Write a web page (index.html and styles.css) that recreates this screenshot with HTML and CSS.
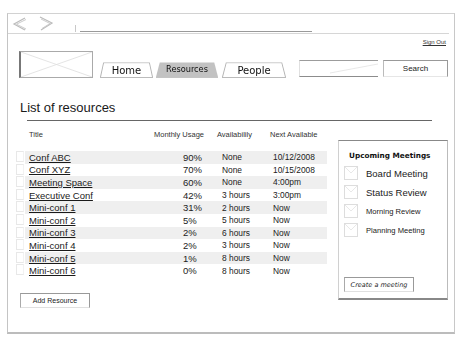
FILE: index.html
```html
<!DOCTYPE html>
<html lang="en">
<head>
<meta charset="UTF-8">
<meta name="viewport" content="width=device-width, initial-scale=1.0">
<title>List of resources</title>
<link rel="stylesheet" href="styles.css">
</head>
<body>
    <div class="window">
        <!-- browser bar -->
        <div class="toolbar">
            <svg class="arrows" width="44" height="16" viewBox="0 0 44 16">
                <polyline points="13,2 2,8 13,14" fill="none" stroke="#bbb" stroke-width="1.2"/>
                <polyline points="14,3.5 4.5,8.2 14,13" fill="none" stroke="#ccc" stroke-width="1"/>
                <polyline points="28,1 40,7 29,14" fill="none" stroke="#bbb" stroke-width="1.2"/>
                <polyline points="29,3 38,7.5 30,12.5" fill="none" stroke="#ccc" stroke-width="1"/>
            </svg>
            <div class="address-tick"></div>
            <div class="address-line"></div>
        </div>

        <div class="signout"><a href="#">Sign Out</a></div>

        <!-- header / navigation -->
        <div class="nav">
            <div class="logo">
                <svg width="100%" height="100%" viewBox="0 0 72 25" preserveAspectRatio="none">
                    <line x1="0" y1="0" x2="72" y2="25" stroke="#ddd" stroke-width="0.8"/>
                    <line x1="72" y1="0" x2="0" y2="25" stroke="#ddd" stroke-width="0.8"/>
                </svg>
            </div>
            <div class="tabs">
                <div class="tab tab-home">Home</div>
                <div class="tab tab-active">Resources</div>
                <div class="tab tab-people">People</div>
            </div>
            <div class="search-input">
                <svg width="100%" height="100%" viewBox="0 0 78 15" preserveAspectRatio="none">
                    <line x1="30" y1="12" x2="78" y2="3" stroke="#e2e2e2" stroke-width="0.8"/>
                </svg>
            </div>
            <div class="search-button">Search</div>
        </div>

        <h1>List of resources</h1>
        <div class="rule"></div>

        <div class="content">
            <div class="resources">
                <div class="table-head">
                    <span>Title</span>
                    <span>Monthly Usage</span>
                    <span>Availabilily</span>
                    <span>Next Available</span>
                </div>
                <div class="rows" id="rows"></div>
                <div class="sketch-button add-button">Add Resource</div>
            </div>

            <div class="meetings">
                <div class="meetings-title">Upcoming Meetings</div>
                <div class="meeting big"><span class="thumb"></span>Board Meeting</div>
                <div class="meeting big"><span class="thumb"></span>Status Review</div>
                <div class="meeting"><span class="thumb"></span>Morning Review</div>
                <div class="meeting"><span class="thumb"></span>Planning Meeting</div>
                <div class="sketch-button create-button">Create a meeting</div>
            </div>
        </div>
    </div>

    <script>
        // resource list
        const resources = [
            ['Conf ABC', '90%', 'None', '10/12/2008'],
            ['Conf XYZ', '70%', 'None', '10/15/2008'],
            ['Meeting Space', '60%', 'None', '4:00pm'],
            ['Executive Conf', '42%', '3 hours', '3:00pm'],
            ['Mini-conf 1', '31%', '2 hours', 'Now'],
            ['Mini-conf 2', '5%', '5 hours', 'Now'],
            ['Mini-conf 3', '2%', '6 hours', 'Now'],
            ['Mini-conf 4', '2%', '3 hours', 'Now'],
            ['Mini-conf 5', '1%', '8 hours', 'Now'],
            ['Mini-conf 6', '0%', '8 hours', 'Now']
        ];

        let html = '';
        resources.forEach(function (r) {
            html += '<div class="row"><span class="check"></span>' +
                '<div class="cells">' +
                '<a href="#" class="name">' + r[0] + '</a>' +
                '<span class="usage">' + r[1] + '</span>' +
                '<span class="avail">' + r[2] + '</span>' +
                '<span class="next">' + r[3] + '</span>' +
                '</div></div>';
        });
        document.getElementById('rows').innerHTML = html;
    </script>
</body>
</html>
```

FILE: styles.css
```css
body {
    margin: 0;
    background: #fff;
    font-family: "Liberation Sans", Arial, sans-serif;
    color: #222;
}
.window {
    box-sizing: border-box;
    margin: 13px 0 0 7px;
    width: 448px;
    height: 321px;
    border-top: 1px solid #d2d2d2;
    border-left: 1px solid #c4c4c4;
    border-right: 1px solid #c8c8c8;
    border-bottom: 2px solid #bcbcbc;
}
/* browser bar */
.toolbar {
    display: flex;
    align-items: center;
    height: 19px;
    margin-right: 5px;
    border-bottom: 1px solid #d6d6d6;
}
.arrows {
    margin-left: 4px;
}
.address-tick {
    width: 1px;
    height: 7px;
    margin: 9px 0 0 19px;
    background: #c8c8c8;
}
.address-line {
    width: 232px;
    height: 0;
    margin: 15px 0 0 4px;
    border-top: 1px solid #9a9a9a;
}
.signout {
    text-align: right;
    font-size: 6px;
    line-height: 8px;
    margin-top: 4px;
    padding-right: 8px;
}
.signout a {
    color: #333;
}
/* navigation */
.nav {
    display: flex;
    align-items: flex-end;
    height: 27px;
    margin-top: 5px;
}
.logo {
    box-sizing: border-box;
    width: 74px;
    height: 27px;
    margin-left: 11px;
    border: 1px solid #aaa;
    border-left: 2px solid #777;
}
.logo svg {
    display: block;
}
.tabs {
    display: flex;
    margin-left: 7px;
    gap: 3px;
}
.tab {
    position: relative;
    z-index: 0;
    height: 17px;
    line-height: 21px;
    text-align: center;
    font-family: "DejaVu Sans", sans-serif;
    font-size: 10px;
    color: #111;
    border-bottom: 1px solid #bbb;
}
.tab::before {
    content: '';
    position: absolute;
    z-index: -1;
    left: 0;
    right: 0;
    top: 0;
    bottom: 0;
    border: 1px solid #b4b4b4;
    border-bottom: none;
    background: #fff;
    transform: perspective(30px) rotateX(14deg);
    transform-origin: bottom;
}
.tab-home {
    width: 53px;
}
.tab-active {
    width: 62px;
    font-size: 8.2px;
    line-height: 19px;
    border-bottom-color: #c4c4c4;
}
.tab-active::before {
    background: #c2c2c2;
    border-color: #c2c2c2;
}
.tab-people {
    width: 64px;
    margin-left: 1px;
}
.search-input {
    box-sizing: border-box;
    width: 79px;
    height: 17px;
    margin: 0 0 1px 13px;
    border-top: 1px solid #9c9c9c;
    border-bottom: 1px solid #8c8c8c;
    border-left: 1px solid #e0e0e0;
}
.search-input svg {
    display: block;
}
.search-button {
    box-sizing: border-box;
    width: 65px;
    height: 17px;
    margin: 0 0 1px 5px;
    border-top: 1px solid #999;
    border-left: 1px solid #bbb;
    border-right: 1px solid #999;
    border-bottom: 1px solid #e6e6e6;
    font-size: 8px;
    line-height: 15px;
    text-align: center;
    color: #222;
}
/* content */
h1 {
    margin: 22px 0 0 12px;
    font-size: 13px;
    line-height: 16px;
    font-weight: normal;
    color: #1a1a1a;
}
.rule {
    width: 405px;
    margin: 4px 0 0 19px;
    border-top: 1px solid #666;
}
.content {
    display: flex;
    align-items: flex-start;
}
.resources {
    width: 312px;
    margin-left: 8px;
}
.table-head {
    display: grid;
    grid-template-columns: 125px 63px 53px auto;
    padding-left: 13px;
    margin-top: 9px;
    font-size: 7.5px;
    line-height: 10px;
    color: #333;
}
.rows {
    margin-top: 11px;
}
.row {
    display: flex;
    height: 12.6px;
}
.check {
    box-sizing: border-box;
    width: 8px;
    height: 11px;
    margin-right: 1px;
    border: 1px solid #e8e8e8;
    border-right-color: #f2f2f2;
}
.cells {
    display: grid;
    grid-template-columns: 154px 39px 51px auto;
    align-items: center;
    width: 302px;
    padding-left: 4px;
    box-sizing: border-box;
}
.row:nth-child(odd) .cells {
    background: #efefef;
}
.name {
    font-size: 9.5px;
    color: #1a1a1a;
}
.usage {
    font-size: 9.5px;
}
.avail,
.next {
    font-size: 8.4px;
    color: #222;
}
.sketch-button {
    box-sizing: border-box;
    width: 70px;
    height: 15px;
    border-top: 1px solid #999;
    border-left: 1px solid #aaa;
    border-right: 1px solid #999;
    border-bottom: 1px solid #e0e0e0;
    font-size: 7px;
    line-height: 14px;
    text-align: center;
    color: #222;
}
.add-button {
    margin: 16px 0 0 4px;
}
/* upcoming meetings */
.meetings {
    display: flex;
    flex-direction: column;
    box-sizing: border-box;
    width: 110px;
    height: 160px;
    margin: 19px 0 0 10px;
    padding: 10px 0 0 5px;
    border-top: 1px solid #888;
    border-left: 1px solid #d0d0d0;
    border-right: 1px solid #bbb;
    border-bottom: 2px solid #888;
}
.meetings-title {
    margin: 0 0 5px 5px;
    font-family: "DejaVu Sans", sans-serif;
    font-size: 7.3px;
    font-weight: bold;
    line-height: 10px;
    color: #111;
}
.meeting {
    display: flex;
    align-items: center;
    height: 14px;
    margin-bottom: 5px;
    font-size: 7.6px;
    color: #222;
}
.meeting.big {
    font-size: 9.5px;
}
.thumb {
    box-sizing: border-box;
    width: 14px;
    height: 14px;
    margin-right: 8px;
    border: 1px solid #ddd;
    background:
        linear-gradient(to top right, transparent 49%, #e8e8e8 50%, transparent 56%) left top / 50% 50% no-repeat,
        linear-gradient(to top left, transparent 49%, #e8e8e8 50%, transparent 56%) right top / 50% 50% no-repeat;
}
.create-button {
    margin-top: auto;
    margin-bottom: 6px;
    font-family: "DejaVu Sans", sans-serif;
    font-style: italic;
    font-size: 6.5px;
}
```
